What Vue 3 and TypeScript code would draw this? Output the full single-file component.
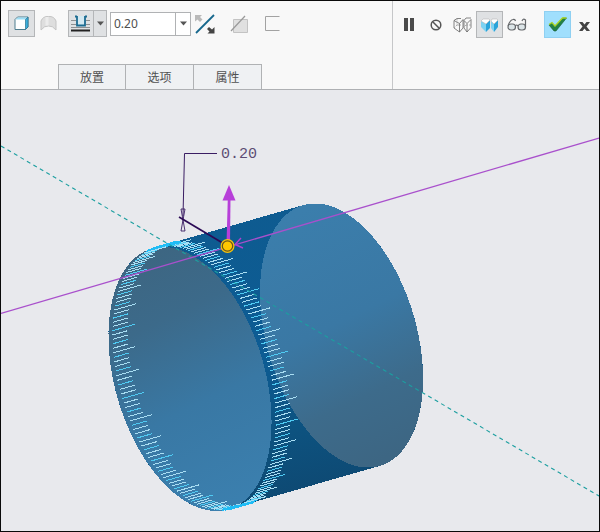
<script setup lang="ts">
import { ref } from 'vue'

interface Tick {
  x1: number
  y1: number
  x2: number
  y2: number
  kind: string
}

const depth = ref('0.20')
const tabs = ['放置', '选项', '属性']

// Ellipse of a cylinder end: half extents and the skew between its axes.
const HALF_W = 81.5
const HALF_H = 132
const SKEW = 71
const FRONT = { x: 190, y: 379 }
const REAR = { x: 341.5, y: 335.5 }
const GRAPH_ANGLE = 9

const rad = (deg: number) => (deg * Math.PI) / 180

function rim(center: { x: number; y: number }, deg: number) {
  return {
    x: center.x + HALF_W * Math.cos(rad(deg - SKEW)),
    y: center.y + HALF_H * Math.cos(rad(deg)),
  }
}

function arc(center: { x: number; y: number }, from: number, to: number): string {
  const points: string[] = []
  for (let deg = from; deg <= to; deg += 2) {
    const p = rim(center, deg)
    points.push(`${p.x.toFixed(1)},${p.y.toFixed(1)}`)
  }
  return points.join(' ')
}

const frontFace = arc(FRONT, 0, 358)
const rearFace = arc(REAR, 0, 358)
const body =
  arc(REAR, GRAPH_ANGLE, GRAPH_ANGLE + 180) + ' ' + arc(FRONT, GRAPH_ANGLE + 180, GRAPH_ANGLE + 360)

// One graduation every two degrees, every fifth one longer.
const tickBase = { x: FRONT.x + 4, y: FRONT.y - 1 }
const ticks: Tick[] = Array.from({ length: 180 }, (_, i) => {
  const deg = i * 2
  const p = rim(tickBase, GRAPH_ANGLE + deg)
  const length = i % 5 === 0 ? 22 : 15
  const edgeOn = Math.abs(Math.sin(rad(deg))) < 0.14
  return {
    x1: p.x,
    y1: p.y,
    x2: p.x + length,
    y2: p.y - length * 0.286,
    kind: edgeOn ? 'edge' : i % 3 === 0 ? 'cyan' : 'pale',
  }
})
</script>

<template>
  <div class="app">
    <header class="dashboard">
      <section class="settings">
        <div class="tools">
          <button class="tool pressed" type="button" aria-label="实体">
            <svg width="17" height="17" viewBox="0 0 17 17">
              <path d="M2 4.500L4.500 2H15V12L12.500 14.500H2Z" fill="#fff" stroke="#4f7c8e" />
              <path d="M2.500 4.500L5 2.500H14.500L12 4.500Z" fill="#9bddf5" />
              <path d="M12.500 4.500L15 2V12L12.500 14.500Z" fill="#3aaedc" stroke="#28738f" stroke-width=".7" />
            </svg>
          </button>
          <button class="tool" type="button" aria-label="曲面">
            <svg width="17" height="17" viewBox="0 0 17 17">
              <path d="M1 6Q3 1 8.500 1.500Q14 1 16 6V15Q12.500 10.500 8.500 11Q4.500 10.500 1 15Z" fill="#dedede" stroke="#c4c4c4" />
              <path d="M7 2V10.500" stroke="#ececec" stroke-width="3" />
            </svg>
          </button>
          <div class="split">
            <button class="split-main" type="button" aria-label="深度方式">
              <svg width="20" height="18" viewBox="0 0 20 18">
                <path d="M0 5.500H5M15 5.500H19M0 9.500H5M15 9.500H19" stroke="#8d9092" />
                <path d="M7 1H13V10H7Z" fill="#d3e9f2" />
                <path d="M4 1.500H6M6 1V10.500H14V1M14 1.500H16" fill="none" stroke="#1c6c91" stroke-width="1.800" />
                <path d="M0 12.500H19" stroke="#8d9092" />
                <path d="M0 15.500H19" stroke="#222" stroke-width="2" />
              </svg>
            </button>
            <button class="split-arrow" type="button" aria-label="更多深度方式">
              <svg width="7" height="5" viewBox="0 0 7 5"><path d="M0 .5H7L3.500 4.500Z" fill="#555" /></svg>
            </button>
          </div>
          <div class="combo">
            <input v-model="depth" class="combo-text" type="text" aria-label="深度" />
            <button class="combo-arrow" type="button" aria-label="最近的值">
              <svg width="7" height="5" viewBox="0 0 7 5"><path d="M0 .5H7L3.500 4.500Z" fill="#555" /></svg>
            </button>
          </div>
          <button class="tool" type="button" aria-label="反向">
            <svg width="20" height="20" viewBox="0 0 20 20">
              <path d="M1 19L19 1" stroke="#16678c" stroke-width="1.800" />
              <path d="M0 1H7L5 3L7.500 5.500L5 8L2.500 5.500L0 7.500Z" fill="#b9b9b9" />
              <path d="M19.500 19.500H12.500L14.500 17.500L12 15L14 13L17 15.500L19.500 13Z" fill="#444" />
            </svg>
          </button>
          <button class="tool spaced" type="button" aria-label="移除材料">
            <svg width="18" height="18" viewBox="0 0 18 18">
              <path d="M3.500 4.500H17.500V17.500H3.500Z" fill="#e0e0e0" stroke="#c3c3c3" />
              <path d="M1 16L15 1" stroke="#999" stroke-width="1.200" />
            </svg>
          </button>
          <button class="tool spaced" type="button" aria-label="加厚草绘">
            <svg width="15" height="15" viewBox="0 0 15 15">
              <path d="M14.500 .5H.5V14.500H14.500" fill="none" stroke="#a2a2a2" />
            </svg>
          </button>
        </div>
        <nav class="tabs">
          <button v-for="tab in tabs" :key="tab" class="tab" type="button">{{ tab }}</button>
        </nav>
      </section>
      <section class="actions">
        <button class="tool" type="button" aria-label="暂停">
          <svg width="12" height="14" viewBox="0 0 12 14"><path d="M1 0H5V13H1ZM7 0H11V13H7Z" fill="#4a4a4a" /></svg>
        </button>
        <button class="tool" type="button" aria-label="无预览">
          <svg width="12" height="12" viewBox="0 0 12 12">
            <circle cx="6" cy="6" r="4.800" fill="none" stroke="#555" stroke-width="1.500" />
            <path d="M2.500 2.500L9.500 9.500" stroke="#555" stroke-width="1.500" />
          </svg>
        </button>
        <button class="tool" type="button" aria-label="分离预览">
          <svg width="20" height="16" viewBox="0 0 20 16" fill="none" stroke="#666" stroke-width=".8">
            <path d="M1 3.500L6.500 6.500L10 2.500M1 3.500V11L6.500 15V6.500M6.500 15L10 11V2.500M1 3.500L4 1.500H8" />
            <path d="M11 3.500L14 6.500L18 2.500M11 3.500V11L14 15V6.500M14 15L18 10.500V2.500M11 3.500L13 1H18" />
            <path d="M4 1.500V8L1 11M4 8H8M13 8L11 10M13 8H18" stroke="#999" stroke-dasharray="2 1" />
          </svg>
        </button>
        <button class="tool pressed" type="button" aria-label="连接预览">
          <svg width="19" height="16" viewBox="0 0 19 16">
            <path d="M1 4L6 7V15L1 10Z" fill="#7dd2f2" />
            <path d="M6 7L10 3V11L6 15Z" fill="#2ba3d9" />
            <path d="M1 4L3 2H9L10 3L6 7Z" fill="#fff" stroke="#aaa" stroke-width=".5" />
            <path d="M11 4L14 7V15L11 11Z" fill="#7dd2f2" />
            <path d="M14 7L18 3V10L14 15Z" fill="#2ba3d9" />
            <path d="M11 4L12 2H17L18 3L14 7Z" fill="#fff" stroke="#aaa" stroke-width=".5" />
          </svg>
        </button>
        <button class="tool" type="button" aria-label="检查几何">
          <svg width="20" height="14" viewBox="0 0 20 14" fill="none" stroke="#66696c" stroke-width="1.200">
            <rect x="1" y="6" width="7.500" height="6" rx="3" fill="#dce5e8" />
            <rect x="11" y="6" width="7.500" height="6" rx="3" fill="#dce5e8" />
            <path d="M8.500 8Q9.500 6 11 8M1 8Q3 2 6 1.500Q8 1 8.500 3M18.500 9V2Q16 0 15 3" />
          </svg>
        </button>
        <button class="tool confirm" type="button" aria-label="确定">
          <svg width="19" height="16" viewBox="0 0 19 16">
            <path d="M1 8L4 6L7 10L15 1H18.500L8 14H6Z" fill="#238243" stroke="#165c38" stroke-width=".6" />
            <path d="M1 7.500L4 5.500L7 9L14.500 1H18.500" fill="none" stroke="#a8d520" stroke-width="1.300" />
          </svg>
        </button>
        <button class="tool" type="button" aria-label="取消">
          <svg width="13" height="15" viewBox="0 0 13 15">
            <path d="M1 5H4.500L6.500 7.500L8.500 5H12L8.500 9.500L12 14H8.500L6.500 11.500L4.500 14H1L4.500 9.500Z" fill="#444" />
          </svg>
        </button>
      </section>
    </header>

    <main class="viewport">
      <svg class="model" viewBox="1 90 598 441" preserveAspectRatio="xMidYMid slice" role="img" aria-label="拉伸模型">
        <defs>
          <linearGradient id="side" x1="0.4" y1="0" x2="0.6" y2="1">
            <stop offset="0" stop-color="#0e5b90" />
            <stop offset=".5" stop-color="#0d5c94" />
            <stop offset=".75" stop-color="#0d527f" />
            <stop offset="1" stop-color="#0e4770" />
          </linearGradient>
          <linearGradient id="front" x1="0.35" y1="0" x2="0.65" y2="1">
            <stop offset="0" stop-color="#3d6682" />
            <stop offset=".25" stop-color="#3c6a8a" />
            <stop offset=".6" stop-color="#3978a4" />
            <stop offset="1" stop-color="#3b7fae" />
          </linearGradient>
          <linearGradient id="rear" x1="0.35" y1="0" x2="0.65" y2="1">
            <stop offset="0" stop-color="#3b7eac" />
            <stop offset=".45" stop-color="#3a78a4" />
            <stop offset=".75" stop-color="#3d6b8b" />
            <stop offset="1" stop-color="#3d6683" />
          </linearGradient>
        </defs>
        <g shape-rendering="crispEdges">
          <polygon :points="body" fill="url(#side)" />
          <polygon :points="rearFace" fill="url(#rear)" />
          <polygon :points="frontFace" fill="url(#front)" />
          <line
            v-for="(tick, i) in ticks"
            :key="i"
            :class="['tick', tick.kind]"
            :x1="tick.x1"
            :y1="tick.y1"
            :x2="tick.x2"
            :y2="tick.y2"
          />
        </g>
        <path d="M1 146L599 496" stroke="#1c9fa0" stroke-width="1.100" stroke-dasharray="4 3.500" />
        <path d="M1 313.500L599 138" stroke="#a950cc" stroke-width="1.300" />
        <path d="M241 238L235 244.500L243 248" fill="none" stroke="#b13fd2" stroke-width="1.400" />
        <g fill="none" stroke="#3a1d63">
          <path d="M217 153.500H184.500L183 216" stroke-width="1" />
          <path d="M181 209H185L181 231H185Z" stroke-width=".9" />
          <path d="M179 217L226 245" stroke="#2b0a55" stroke-width="1.700" />
        </g>
        <path d="M226.500 243L227.800 199H230.500L230 243Z" fill="#b73fd9" />
        <path d="M229 185L235.500 200.500H222.500Z" fill="#b73fd9" />
        <circle cx="227.500" cy="246" r="7" fill="#f5c50d" />
        <circle cx="227.500" cy="246" r="5.200" fill="#ffc800" stroke="#67531d" stroke-width="1.200" />
        <text class="dimension" x="221" y="158">0.20</text>
      </svg>
    </main>
  </div>
</template>

<style>
body {
  margin: 0;
}
</style>

<style scoped>
.app {
  box-sizing: border-box;
  display: flex;
  flex-direction: column;
  min-height: 100vh;
  border: 1px solid #0a0a0a;
  background: #e8e9ed;
  font-family: "Noto Sans", "Noto Sans CJK SC", sans-serif;
  color: #505050;
}

.dashboard {
  display: flex;
  min-height: 88px;
  border-bottom: 1px solid #aeb0b3;
  background: #f8f8f8;
}

.settings {
  display: flex;
  flex: 1;
  flex-direction: column;
  justify-content: space-between;
  padding-top: 9px;
}

.tools {
  display: flex;
  align-items: center;
  padding-left: 7px;
}

button {
  display: flex;
  align-items: center;
  justify-content: center;
  box-sizing: border-box;
  margin: 0;
  padding: 0;
  border: 0;
  background: none;
  color: inherit;
  font: inherit;
}

.tool {
  width: 27px;
  height: 27px;
  border: 1px solid transparent;
}

.pressed {
  border-color: #b4b6b8;
  background: #dfe1e3;
}

.spaced {
  margin-left: 7px;
}

.split {
  display: flex;
  box-sizing: border-box;
  height: 27px;
  margin: 0 3px 0 6px;
  border: 1px solid #b4b6b8;
  background: #dfe1e3;
}

.split-main {
  width: 24px;
}

.split-arrow {
  width: 13px;
  border-left: 1px solid #b4b6b8;
}

.combo {
  display: flex;
  box-sizing: border-box;
  width: 81px;
  height: 24px;
  border: 1px solid #b0b2b4;
  background: #fff;
}

.combo-text {
  flex: 1;
  min-width: 0;
  padding: 0 3px;
  border: 0;
  background: none;
  color: #505050;
  font: 12px "Noto Sans", sans-serif;
}

.combo-arrow {
  width: 15px;
  border-left: 1px solid #b0b2b4;
}

.tabs {
  display: flex;
  padding-left: 57px;
}

.tab {
  width: 68px;
  height: 25px;
  padding-bottom: 2px;
  border: 1px solid #b0b2b4;
  border-bottom: 0;
  background: #eff1f3;
  font: 12px "Noto Sans CJK SC", sans-serif;
}

.tab + .tab {
  border-left: 0;
}

.actions {
  display: flex;
  align-items: flex-start;
  padding: 10px 1px 0 2px;
  border-left: 1px solid #c6c7c9;
}

.confirm {
  margin-left: 14px;
  border-color: #8fd0f2;
  background: #a0dffd;
}

.viewport {
  display: flex;
  flex: 1;
}

.model {
  display: block;
  width: 100%;
}

.tick {
  stroke-width: 1;
}

.pale {
  stroke: #a9def3;
}

.cyan {
  stroke: #4fcbf3;
}

.edge {
  stroke: #1fbcf5;
  stroke-width: 2;
}

.dimension {
  fill: #5c4c74;
  font: 15px "Liberation Mono", monospace;
}
</style>
